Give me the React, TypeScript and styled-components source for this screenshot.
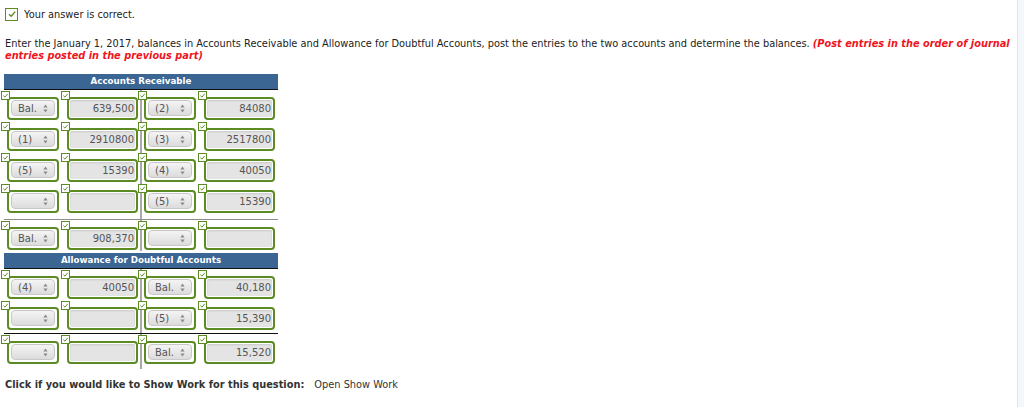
import React from 'react';
import styled, { createGlobalStyle } from 'styled-components';

// ── Data ─────────────────────────────────────────────────────────────────────

type Entry = { label: string; value: string };
type Row = { left: Entry; right: Entry; total?: boolean };

const receivableRows: Row[] = [
  { left: { label: 'Bal.', value: '639,500' }, right: { label: '(2)', value: '84080' } },
  { left: { label: '(1)', value: '2910800' }, right: { label: '(3)', value: '2517800' } },
  { left: { label: '(5)', value: '15390' }, right: { label: '(4)', value: '40050' } },
  { left: { label: '', value: '' }, right: { label: '(5)', value: '15390' } },
  { left: { label: 'Bal.', value: '908,370' }, right: { label: '', value: '' }, total: true },
];

const allowanceRows: Row[] = [
  { left: { label: '(4)', value: '40050' }, right: { label: 'Bal.', value: '40,180' } },
  { left: { label: '', value: '' }, right: { label: '(5)', value: '15,390' } },
  { left: { label: '', value: '' }, right: { label: 'Bal.', value: '15,520' }, total: true },
];

// ── Styles ───────────────────────────────────────────────────────────────────

const GREEN = '#5b8b22';

const GlobalStyle = createGlobalStyle`
  html, body { margin: 0; padding: 0; background: #fff; }
  body {
    font-family: "DejaVu Sans", Verdana, sans-serif;
    font-size: 9.8px;
    color: #222;
  }
`;

const Page = styled.div`
  display: flex;
  width: 1024px;
  height: 407px;
  overflow: hidden;
`;

const Main = styled.div`
  flex: 1;
  padding: 7px 0 0 5px;
`;

const SideStrip = styled.div`
  width: 6px;
  background: #f3f6fa;
  border-left: 1px solid #dfe5ec;
`;

const Correct = styled.div`
  display: flex;
  align-items: center;
  gap: 6px;
  height: 14px;
`;

const BigCheck = styled.span`
  width: 11px;
  height: 11px;
  border: 1px solid ${GREEN};
  background: #fff;
  display: inline-flex;
  align-items: center;
  justify-content: center;
`;

const Instructions = styled.p`
  margin: 17px 0 0;
  line-height: 12px;
  width: 1010px;
`;

const Hint = styled.span`
  color: #f0141e;
  font-weight: bold;
  font-style: italic;
`;

const Account = styled.div`
  width: 274px;
  margin-left: -1px;
`;

const Header = styled.div<{ $gap?: number }>`
  margin-top: ${p => p.$gap ?? 0}px;
  height: 15px;
  background: #3b6592;
  color: #fff;
  font-weight: bold;
  font-size: 8.7px;
  text-align: center;
  line-height: 15px;
  border-bottom: 1px solid #111;
`;

const Body = styled.div<{ $extend?: number }>`
  padding-bottom: ${p => p.$extend ?? 0}px;
  background: linear-gradient(#a9a9a9, #a9a9a9) no-repeat 136px 0 / 2px 100%;
`;

const TRow = styled.div<{ $total?: boolean; $line?: string; $gap?: number }>`
  display: grid;
  grid-template-columns: 137px 137px;
  height: 31px;
  ${p =>
    p.$total &&
    `
    margin-top: ${p.$gap}px;
    border-top: 1px solid ${p.$line};
  `}
`;

const Half = styled.div`
  display: flex;
  gap: 8px;
  padding: 7px 0 0 3px;
`;

const Cell = styled.div<{ $w: number }>`
  position: relative;
  width: ${p => p.$w}px;
  height: 23px;
  box-sizing: border-box;
  border: 2px solid ${GREEN};
  border-radius: 4px;
  background: #fff;
`;

const Tick = styled.span`
  position: absolute;
  left: -8px;
  top: -8px;
  width: 7px;
  height: 7px;
  border: 1px solid ${GREEN};
  background: #fff;
  display: flex;
  align-items: center;
  justify-content: center;
  z-index: 1;
`;

const SelectBox = styled.div`
  position: absolute;
  inset: 1px 2px 2px 2px;
  border: 1px solid #c8c8c8;
  border-radius: 4px;
  background: linear-gradient(#f4f4f4, #dcdcdc);
  display: flex;
  align-items: center;
  justify-content: space-between;
  padding: 0 6px 0 6px;
  color: #555;
  font-size: 10px;
`;

const InputBox = styled.div`
  position: absolute;
  inset: 1px;
  border-radius: 2px;
  background: #e4e4e4;
  box-shadow: inset 0 1px 2px rgba(0, 0, 0, 0.12);
  display: flex;
  align-items: center;
  justify-content: flex-end;
  padding-right: 1px;
  color: #555;
  font-size: 10px;
`;

const Footer = styled.div`
  margin-top: 10px;
  display: flex;
  gap: 10px;
  color: #333;
`;

const FooterLabel = styled.span`
  font-weight: bold;
`;

// ── Parts ────────────────────────────────────────────────────────────────────

const CheckMark: React.FC<{ size: number }> = ({ size }) => (
  <svg width={size} height={size} viewBox="0 0 10 10">
    <path d="M2 5.2 L4.2 7.3 L8.2 2.6" fill="none" stroke={GREEN} strokeWidth="1.4" />
  </svg>
);

const Arrows = () => (
  <svg width="5" height="9" viewBox="0 0 5 9">
    <path d="M2.5 0.5 L4.6 3.6 H0.4 Z M2.5 8.5 L4.6 5.4 H0.4 Z" fill="#8a8a8a" />
  </svg>
);

const EntryCells: React.FC<{ entry: Entry }> = ({ entry }) => (
  <Half>
    <Cell $w={52}>
      <Tick>
        <CheckMark size={7} />
      </Tick>
      <SelectBox>
        <span>{entry.label}</span>
        <Arrows />
      </SelectBox>
    </Cell>
    <Cell $w={71}>
      <Tick>
        <CheckMark size={7} />
      </Tick>
      <InputBox>{entry.value}</InputBox>
    </Cell>
  </Half>
);

const TAccount: React.FC<{ rows: Row[]; line: string; gap: number; extend?: number }> = ({
  rows,
  line,
  gap,
  extend,
}) => (
  <Body $extend={extend}>
    {rows.map((r, i) => (
      <TRow key={i} $total={r.total} $line={line} $gap={gap}>
        <EntryCells entry={r.left} />
        <EntryCells entry={r.right} />
      </TRow>
    ))}
  </Body>
);

// ── App ──────────────────────────────────────────────────────────────────────

export default function App() {
  return (
    <>
      <GlobalStyle />
      <Page>
        <Main>
          <Correct>
            <BigCheck>
              <CheckMark size={10} />
            </BigCheck>
            <span>Your answer is correct.</span>
          </Correct>
          <Instructions>
            Enter the January 1, 2017, balances in Accounts Receivable and Allowance for
            Doubtful Accounts, post the entries to the two accounts and determine the
            balances.{' '}
            <Hint>(Post entries in the order of journal entries posted in the previous part)</Hint>
          </Instructions>
          <Account>
            <Header $gap={12}>Accounts Receivable</Header>
            <TAccount rows={receivableRows} line="#8c8c8c" gap={5} />
            <Header $gap={2}>Allowance for Doubtful Accounts</Header>
            <TAccount rows={allowanceRows} line="#111" gap={2} extend={4} />
          </Account>
          <Footer>
            <FooterLabel>Click if you would like to Show Work for this question:</FooterLabel>
            <span>Open Show Work</span>
          </Footer>
        </Main>
        <SideStrip />
      </Page>
    </>
  );
}
